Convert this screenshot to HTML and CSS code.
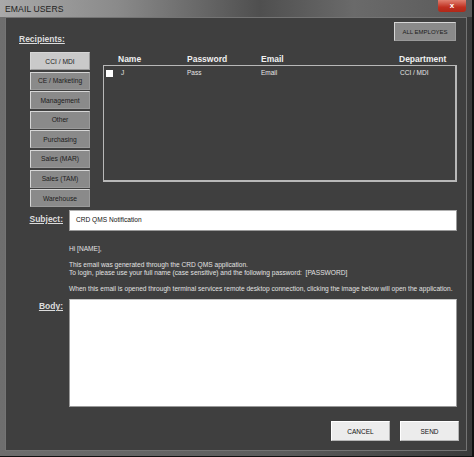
FILE: index.html
```html
<!DOCTYPE html>
<html>
<head>
<meta charset="utf-8">
<link rel="stylesheet" href="styles.css">
</head>
<body>
<div class="window">
  <div class="titlebar">
    <span class="title">EMAIL USERS</span>
    <span class="close">x</span>
  </div>
  <div class="frame">
    <div class="toprow">
      <span class="label recipients">Recipients:</span>
      <span class="btn allbtn">ALL EMPLOYES</span>
    </div>
    <div class="midrow">
      <div class="depts">
        <span class="btn dept selected">CCI / MDI</span>
        <span class="btn dept">CE / Marketing</span>
        <span class="btn dept">Management</span>
        <span class="btn dept">Other</span>
        <span class="btn dept">Purchasing</span>
        <span class="btn dept">Sales (MAR)</span>
        <span class="btn dept">Sales (TAM)</span>
        <span class="btn dept">Warehouse</span>
      </div>
      <div class="table">
        <div class="thead">
          <span></span><span>Name</span><span>Password</span><span>Email</span><span>Department</span>
        </div>
        <div class="listbox">
          <div class="trow">
            <span><i class="check"></i></span><span>J</span><span>Pass</span><span>Email</span><span>CCI / MDI</span>
          </div>
        </div>
      </div>
    </div>
    <div class="field subject">
      <span class="label">Subject:</span>
      <div class="input">CRD QMS Notification</div>
    </div>
    <div class="message">
      <p>Hi [NAME],</p>
      <p>This email was generated through the CRD QMS application.<br>To login, please use your full name (case sensitive) and the following password:&nbsp; [PASSWORD]</p>
      <p>When this email is opened through terminal services remote desktop connection, clicking the image below will open the application.</p>
    </div>
    <div class="field body">
      <span class="label">Body:</span>
      <div class="textarea"></div>
    </div>
    <div class="footer">
      <span class="btn light">CANCEL</span>
      <span class="btn light">SEND</span>
    </div>
  </div>
</div>
</body>
</html>
```
FILE: styles.css
```css
* { box-sizing: border-box; }
html, body { margin: 0; padding: 0; background: #1a1a1a; }
body { font-family: "Liberation Sans", Arial, sans-serif; }

.window {
  width: 474px;
  height: 457px;
  background: linear-gradient(90deg, #6e6e6e 0%, #5c5c5c 60%, #3a3a3a 100%);
  border-right: 2px solid #111;
  border-bottom: 1px solid #111;
  display: flex;
  flex-direction: column;
}

.titlebar {
  height: 17px;
  position: relative;
  background: linear-gradient(90deg, #a9a9a9 0%, #8a8a8a 25%, #4f4f4f 55%, #6a6a6a 75%, #5a5a5a 100%);
  display: flex;
  align-items: center;
  padding-left: 5px;
}
.title {
  font-size: 8.6px;
  color: #1e1e1e;
  letter-spacing: 0.1px;
}
.close {
  position: absolute;
  top: 0;
  right: 6px;
  width: 28px;
  height: 12px;
  background: linear-gradient(#e08070, #c03020 60%, #b02818);
  border-radius: 0 0 3px 3px;
  color: #fff;
  font-size: 8px;
  font-weight: bold;
  text-align: center;
  line-height: 11px;
}

.frame {
  margin: 0 5px 5px 5px;
  flex: 1;
  border: 1px solid #747474;
  background: #3f3f3f;
  display: flex;
  flex-direction: column;
}

.label {
  font-size: 8.5px;
  font-weight: bold;
  color: #dcdcdc;
  text-decoration: underline;
}

.toprow {
  display: flex;
  justify-content: space-between;
  align-items: flex-start;
  padding: 4px 10px 0 13px;
  height: 24px;
}
.recipients { margin-top: 12px; }

.btn {
  display: flex;
  align-items: center;
  justify-content: center;
  font-size: 6.7px;
  color: #1c1c1c;
  background: #8a8a8a;
  border: 1px solid #d6d6d6;
  border-right-color: #9a9a9a;
  border-bottom-color: #9a9a9a;
}
.allbtn {
  width: 62px;
  height: 19px;
  font-size: 6px;
}

.midrow {
  display: flex;
  padding-left: 24px;
  margin-top: 10px;
}
.depts {
  width: 60px;
  display: flex;
  flex-direction: column;
  gap: 1.6px;
}
.dept { height: 18px; }
.dept.selected { background: #c9c9c9; }

.table {
  margin-left: 13px;
  width: 354px;
  margin-top: 2px;
}
.thead, .trow {
  display: grid;
}
.thead {
  grid-template-columns: 15px 69px 74px 138px 1fr;
  font-size: 8.5px;
  font-weight: bold;
  color: #f0f0f0;
  height: 11px;
  line-height: 10px;
}
.listbox {
  height: 117px;
  border: 1px solid #b8b8b8;
  border-right-width: 2px;
  border-bottom-width: 2px;
  padding-top: 3px;
}
.trow {
  grid-template-columns: 17px 66px 74px 139px 1fr;
  font-size: 6.5px;
  color: #e6e6e6;
  line-height: 8px;
}
.check {
  display: block;
  width: 7px;
  height: 7px;
  margin: 1px 0 0 2px;
  background: #fff;
}

.field {
  display: flex;
  align-items: flex-start;
}
.field .label {
  width: 57px;
  text-align: right;
  margin-right: 6px;
}
.subject { margin-top: 3px; }
.subject .label { margin-top: 4px; }
.input {
  width: 388px;
  height: 21px;
  background: #fff;
  border: 1px solid #9a9a9a;
  border-top-color: #b0b0b0;
  font-size: 6.6px;
  color: #111;
  padding: 5px 0 0 6px;
}

.message {
  margin: 14px 0 0 63px;
  font-size: 6.62px;
  color: #e2e2e2;
  line-height: 8px;
}
.message p { margin: 0 0 8px 0; }
.message p:last-child { margin-bottom: 0; }

.body { margin-top: 6px; }
.body .label { margin-top: 2px; }
.textarea {
  width: 388px;
  height: 108px;
  background: #fff;
  border: 1px solid #9a9a9a;
  border-top-color: #c8c8c8;
}

.footer {
  display: flex;
  justify-content: flex-end;
  gap: 10px;
  padding-right: 7px;
  margin-top: 14px;
}
.btn.light {
  width: 59px;
  height: 20px;
  background: #ececec;
  border-color: #ffffff #b5b5b5 #b5b5b5 #ffffff;
  font-size: 6.5px;
  color: #111;
}
```
